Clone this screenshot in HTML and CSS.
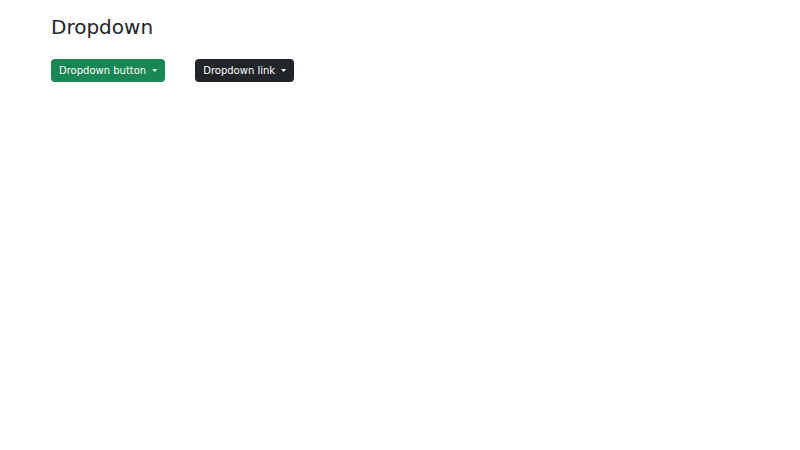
FILE: index.html
```html
<!DOCTYPE html>
<html lang="en">
<head>
  <meta charset="UTF-8">
  <meta name="viewport" content="width=device-width, initial-scale=1">
  <title>Dropdown</title>
  <link rel="stylesheet" href="styles.css">
</head>
<body>

<div class="container">
  <h2>Dropdown</h2>

  <div class="dropdowns">
    <button type="button" class="btn btn-success dropdown-toggle">Dropdown button</button>
    <a href="#" class="btn btn-dark dropdown-toggle">Dropdown link</a>
  </div>
</div>

</body>
</html>
```

FILE: styles.css
```css
* {
    box-sizing: border-box;
}

body {
    margin: 0;
    font-family: "DejaVu Sans", sans-serif;
    font-size: 10px;
    line-height: 15px;
    color: #212529;
    background: #fff;
}

.container {
    padding: 15px 51px;
}

h2 {
    margin: 0 0 20px;
    font-size: 20px;
    font-weight: 400;
    line-height: 24px;
}

.dropdowns {
    display: flex;
    gap: 30px;
}

.btn {
    display: flex;
    align-items: center;
    gap: 6px;
    padding: 4px 8px;
    border: 0;
    border-radius: 4px;
    font: inherit;
    color: #fff;
    text-decoration: none;
    cursor: pointer;
}

.btn-success {background: #198754;}
.btn-dark {background: #212529;}

/* caret */
.dropdown-toggle::after {
    content: "";
    width: 5px;
    height: 3px;
    background: currentColor;
    clip-path: polygon(0 0, 100% 0, 50% 100%);
}
```
